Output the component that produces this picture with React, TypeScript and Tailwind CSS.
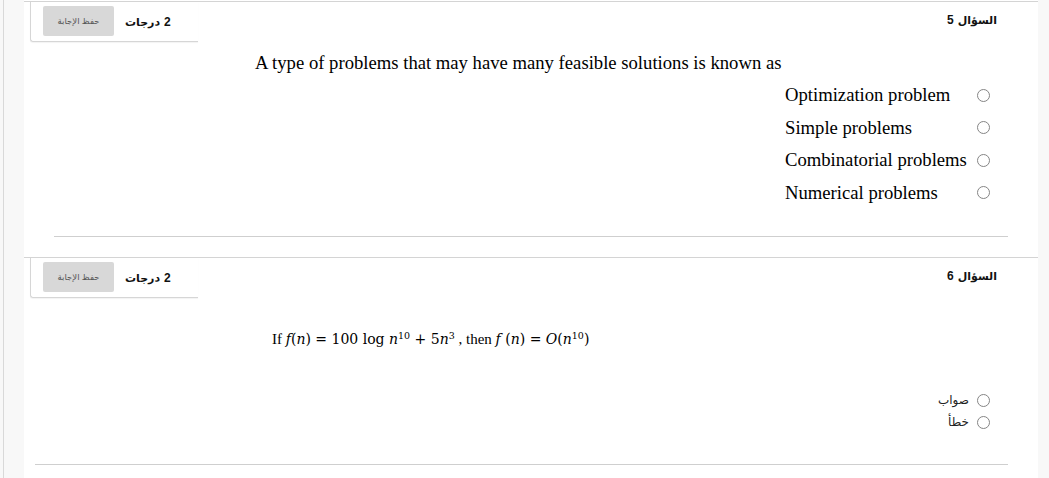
import React from "react";

const ar = { fontFamily: '"Liberation Sans", "DejaVu Sans", sans-serif' };
const serif = { fontFamily: '"Liberation Serif", "DejaVu Serif", serif' };

function Radio() {
  return <span className="block h-[13px] w-[13px] rounded-full border border-[#858585] bg-white" />;
}

function QuestionHeader({ number }: { number: number }) {
  return (
    <div className="flex h-[40px] items-start justify-between" style={ar}>
      <div className="ml-[6px] flex h-[40px] w-[168px] items-start rounded-bl-[3px] border-b border-l border-[#d6d6d6] shadow-[0_1px_1px_rgba(0,0,0,0.05)]">
        <button
          type="button"
          className="ml-[12px] mt-[4px] flex h-[30px] w-[71px] items-center justify-center rounded-[2px] bg-[#d8d8d8] text-[8.5px] text-[#555]"
        >
          حفظ الإجابة
        </button>
        <div className="ml-[11px] mt-[11px] flex items-center gap-[4px] text-[11px] font-bold text-[#111]">
          <span>درجات</span>
          <span className="text-[12px]">2</span>
        </div>
      </div>
      <div className="mr-[41px] mt-[9px] flex items-center gap-[4px] text-[11px] font-bold text-[#111]">
        <span className="text-[12px]">{number}</span>
        <span>السؤال</span>
      </div>
    </div>
  );
}

const options = ["Optimization problem", "Simple problems", "Combinatorial problems", "Numerical problems"];

export default function App() {
  return (
    <div className="flex h-[478px] w-[1049px] overflow-hidden bg-[#f8f8f8]">
      <div className="w-[3px]" />
      <div className="w-px bg-[#d9d9d9]" />
      <div className="w-[20px]" />
      <div className="flex w-[1014px] flex-col bg-white pt-px">
        {/* question 5 */}
        <section className="border-t border-[#d4d4d4]">
          <QuestionHeader number={5} />
          <p className="mt-[10px] pl-[231px] text-[18.67px] leading-[22px] text-black" style={serif}>
            A type of problems that may have many feasible solutions is known as
          </p>
          <div className="mt-[5px] flex flex-col pl-[761px]">
            {options.map((o) => (
              <label key={o} className="flex h-[32.5px] items-center">
                <span className="w-[192px] text-[18.67px] text-black" style={serif}>
                  {o}
                </span>
                <Radio />
              </label>
            ))}
          </div>
          <div className="mx-[30px] mt-[27px] h-px bg-[#cfcfcf]" />
        </section>

        {/* question 6 */}
        <section className="mt-[20px] border-t border-[#d4d4d4]">
          <QuestionHeader number={6} />
          <p
            className="mt-[31px] pl-[248px] text-[14px] leading-[20px] text-black"
            style={{ fontFamily: '"DejaVu Serif", "Liberation Serif", serif' }}
          >
            <span style={serif} className="text-[15px]">If </span>
            <i>f</i>(<i>n</i>) = 100 log <i>n</i>
            <sup className="text-[9.5px]">10</sup> + 5<i>n</i>
            <sup className="text-[9.5px]">3</sup>
            <span style={serif} className="text-[15px]"> , then </span>
            <i>f</i> (<i>n</i>) = <i>O</i>(<i>n</i>
            <sup className="text-[9.5px]">10</sup>)
          </p>
          <div className="mt-[40px] flex flex-col items-end pr-[48px]" style={ar}>
            {["صواب", "خطأ"].map((t) => (
              <label key={t} className="flex h-[22px] items-center gap-[8px]">
                <span className="text-[12px] text-[#222]">{t}</span>
                <Radio />
              </label>
            ))}
          </div>
          <div className="ml-[11px] mr-[30px] mt-[31px] h-px bg-[#cfcfcf]" />
        </section>
      </div>
    </div>
  );
}
